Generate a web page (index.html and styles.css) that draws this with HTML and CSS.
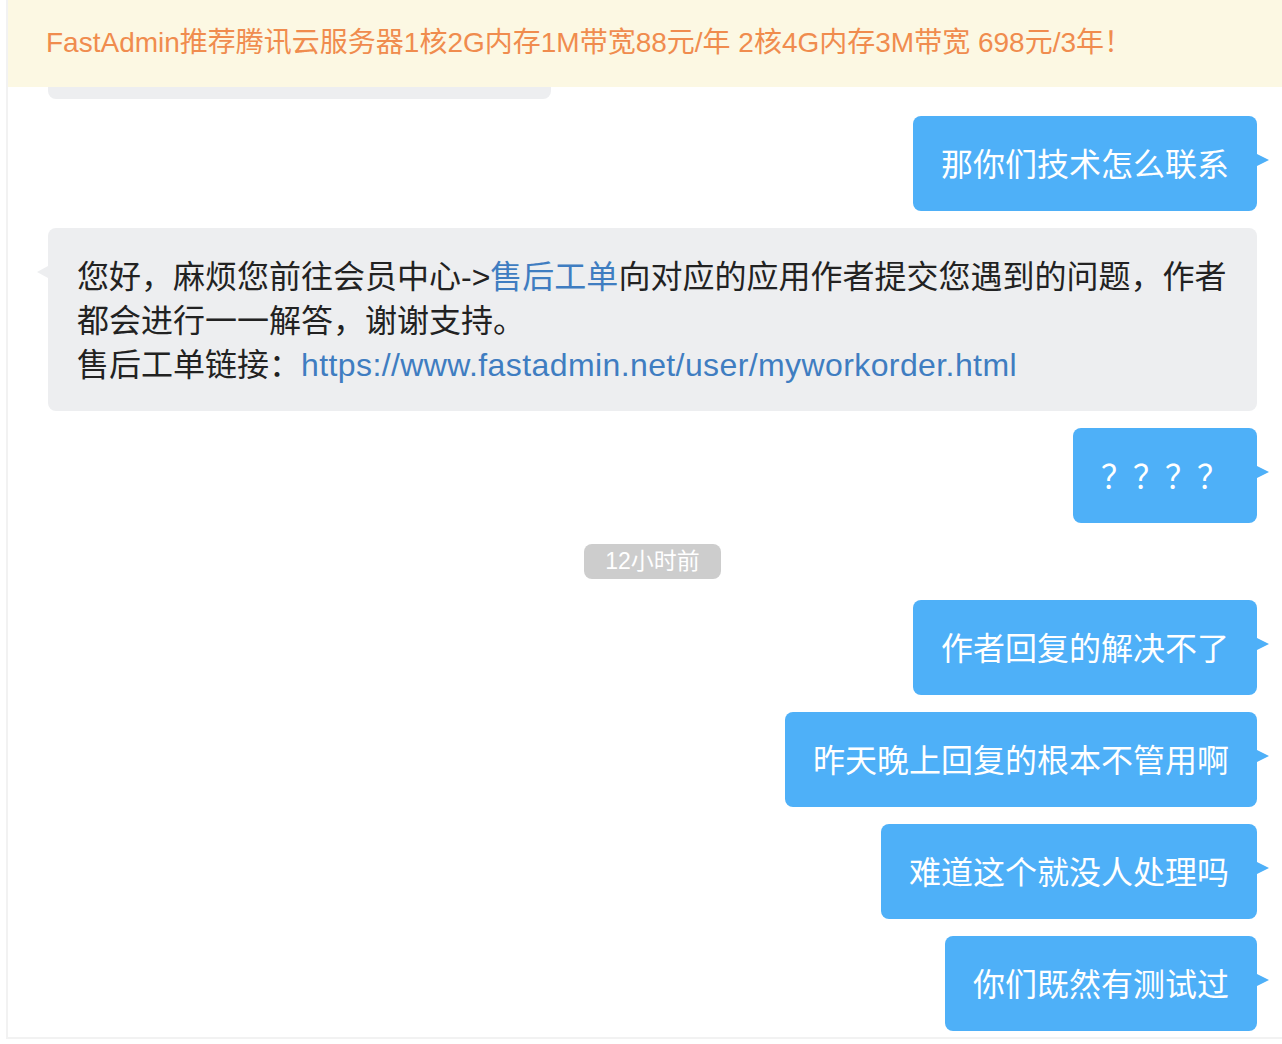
FILE: index.html
```html
<!DOCTYPE html>
<html lang="zh-CN">
<head>
<meta charset="utf-8">
<title>FastAdmin 对话</title>
<link rel="stylesheet" href="styles.css">
</head>
<body>
<div class="chat">
  <div class="notice">FastAdmin推荐腾讯云服务器1核2G内存1M带宽88元/年 2核4G内存3M带宽 698元/3年！</div>
  <div class="messages">
    <div class="row row-left"><div class="bubble bubble-in bubble-stub"></div></div>
    <div class="row row-right"><div class="bubble bubble-out">那你们技术怎么联系</div></div>
    <div class="row row-left">
      <div class="bubble bubble-in bubble-wide">您好，麻烦您前往会员中心-&gt;<a class="link" href="#">售后工单</a>向对应的应用作者提交您遇到的问题，作者<br>都会进行一一解答，谢谢支持。<br>售后工单链接：<a class="link link-url" href="#">https://www.fastadmin.net/user/myworkorder.html</a></div>
    </div>
    <div class="row row-right"><div class="bubble bubble-out">？？？？</div></div>
    <div class="row row-center"><span class="time">12小时前</span></div>
    <div class="row row-right"><div class="bubble bubble-out">作者回复的解决不了</div></div>
    <div class="row row-right"><div class="bubble bubble-out">昨天晚上回复的根本不管用啊</div></div>
    <div class="row row-right"><div class="bubble bubble-out">难道这个就没人处理吗</div></div>
    <div class="row row-right"><div class="bubble bubble-out">你们既然有测试过</div></div>
  </div>
</div>
</body>
</html>
```
FILE: styles.css
```css
html, body {
  margin: 0;
  padding: 0;
  background: #ffffff;
}
body {
  font-family: "Liberation Sans", "Noto Sans CJK SC", sans-serif;
  overflow: hidden;
}
.chat {
  position: relative;
  box-sizing: border-box;
  margin-left: 6px;
  height: 1039px;
  border-left: 2px solid #f2f2f2;
  border-bottom: 2px solid #f2f2f2;
  overflow: hidden;
}
.notice {
  position: absolute;
  top: 0;
  left: 0;
  right: 0;
  height: 87px;
  line-height: 85px;
  padding-left: 38px;
  background: #fcf8e3;
  color: #f08c4e;
  font-size: 28px;
  white-space: nowrap;
  z-index: 2;
}
.messages {
  box-sizing: border-box;
  height: 100%;
  display: flex;
  flex-direction: column;
  justify-content: flex-end;
  gap: 17px;
  padding: 0 25px 6px 40px;
}
.row {
  display: flex;
  flex-shrink: 0;
}
.row-right { justify-content: flex-end; }
.row-left { justify-content: flex-start; }
.row-center { justify-content: center; padding: 4px 0; }
.bubble {
  position: relative;
  font-size: 32px;
  line-height: 44px;
  padding: 27px 28px 24px;
  border-radius: 8px;
  white-space: nowrap;
}
.bubble-out {
  background: #4eb0f8;
  color: #ffffff;
}
.bubble-out::after {
  content: "";
  position: absolute;
  right: -12px;
  top: 38px;
  border-left: 12px solid #4eb0f8;
  border-top: 6px solid transparent;
  border-bottom: 6px solid transparent;
}
.bubble-in {
  background: #edeef0;
  color: #222222;
}
.bubble-in::before {
  content: "";
  position: absolute;
  left: -11px;
  top: 38px;
  border-right: 11px solid #edeef0;
  border-top: 6px solid transparent;
  border-bottom: 6px solid transparent;
}
.bubble-wide { flex: 1; padding-left: 29px; }
.bubble-stub {
  width: 447px;
  height: 44px;
}
.link {
  color: #3f7dc1;
  text-decoration: none;
}
.link-url { letter-spacing: 0.4px; }
.time {
  display: inline-block;
  height: 35px;
  line-height: 35px;
  padding: 0 21px;
  border-radius: 8px;
  background: #cdcdcd;
  color: #ffffff;
  font-size: 23px;
}
```
